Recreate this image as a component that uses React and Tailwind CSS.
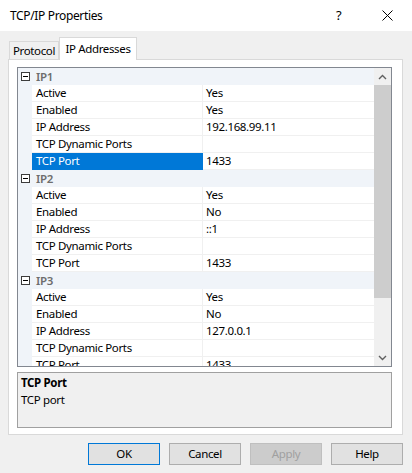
const groups = [
  {
    name: "IP1",
    rows: [
      ["Active", "Yes"],
      ["Enabled", "Yes"],
      ["IP Address", "192.168.99.11"],
      ["TCP Dynamic Ports", ""],
      ["TCP Port", "1433", true],
    ],
  },
  {
    name: "IP2",
    rows: [
      ["Active", "Yes"],
      ["Enabled", "No"],
      ["IP Address", "::1"],
      ["TCP Dynamic Ports", ""],
      ["TCP Port", "1433"],
    ],
  },
  {
    name: "IP3",
    rows: [
      ["Active", "Yes"],
      ["Enabled", "No"],
      ["IP Address", "127.0.0.1"],
      ["TCP Dynamic Ports", ""],
      ["TCP Port", "1433"],
    ],
  },
];

function MinusBox() {
  return (
    <svg width="9" height="9" viewBox="0 0 9 9" className="block">
      <rect x="0.5" y="0.5" width="8" height="8" fill="white" stroke="#3c3c3c" />
      <line x1="2" y1="4.5" x2="7" y2="4.5" stroke="#000" />
    </svg>
  );
}

function Chevron({ down }) {
  return (
    <svg width="9" height="6" viewBox="0 0 9 6" className="block">
      <polyline
        points={down ? "1,1 4.5,4.5 8,1" : "1,5 4.5,1.5 8,5"}
        fill="none"
        stroke="#606060"
        strokeWidth="1.4"
      />
    </svg>
  );
}

function Button({ label, primary, disabled }) {
  return (
    <div
      className={
        "flex h-[22px] w-[72px] items-center justify-center border " +
        (primary
          ? "border-[#0078d7] bg-[#e1e1e1] text-black"
          : disabled
          ? "border-[#bfbfbf] bg-[#cccccc] text-[#a0a0a0]"
          : "border-[#adadad] bg-[#e1e1e1] text-black")
      }
    >
      {label}
    </div>
  );
}

export default function App() {
  return (
    <div
      className="flex h-[473px] w-[412px] flex-col overflow-hidden bg-[#f0f0f0] text-[11.5px] tracking-[-0.35px] text-black"
      style={{ fontFamily: '"Noto Sans", "Open Sans", sans-serif' }}
    >
      {/* title bar */}
      <div className="flex h-[31px] items-center bg-white pl-[10px]">
        <span className="flex-1 text-[12px]">TCP/IP Properties</span>
        <span className="w-[12px] text-[13px]">?</span>
        <div className="ml-[33px] mr-[19px] flex h-[31px] w-[12px] items-center justify-center">
          <svg width="11" height="11" viewBox="0 0 11 11">
            <line x1="0.5" y1="0.5" x2="10.5" y2="10.5" stroke="#000" strokeWidth="1" />
            <line x1="10.5" y1="0.5" x2="0.5" y2="10.5" stroke="#000" strokeWidth="1" />
          </svg>
        </div>
      </div>

      {/* tabs */}
      <div className="mt-[6px] flex h-[22px] items-end pl-[9px]">
        <div className="flex h-[18px] w-[50px] items-center justify-center border border-b-0 border-[#d9d9d9] bg-[#f0f0f0]">
          Protocol
        </div>
        <div className="relative z-10 -mb-px flex h-[23px] w-[78px] items-center justify-center border border-b-0 border-[#d9d9d9] bg-white">
          IP Addresses
        </div>
      </div>

      {/* tab page */}
      <div className="ml-[8px] flex h-[376px] w-[395px] flex-col border border-[#d9d9d9] bg-white pl-[8px] pt-[7px]">
        {/* property grid */}
        <div className="flex h-[300px] w-[375px] border border-[#828790] bg-white">
          <div className="flex-1 overflow-hidden">
            {groups.map((g) => (
              <div key={g.name}>
                <div className="flex h-[17px] items-center bg-[#f0f4f9]">
                  <div className="flex w-[14px] justify-center pl-[1px]">
                    <MinusBox />
                  </div>
                  <span className="pl-[4px] font-semibold text-[#6d6d6d]">{g.name}</span>
                </div>
                {g.rows.map(([k, v, sel]) => (
                  <div key={k} className="flex h-[17px]">
                    <div className="w-[14px] bg-[#f0f4f9]" />
                    <div
                      className={
                        "flex w-[171px] items-center border-b border-r pl-[4px] " +
                        (sel
                          ? "border-[#0078d7] bg-[#0078d7] text-white"
                          : "border-[#f0f0f0] text-black")
                      }
                    >
                      {k}
                    </div>
                    <div className="flex flex-1 items-center border-b border-[#f0f0f0] pl-[3px]">{v}</div>
                  </div>
                ))}
              </div>
            ))}
          </div>
          {/* scrollbar */}
          <div className="flex w-[17px] flex-col bg-[#f0f0f0]">
            <div className="flex h-[17px] items-center justify-center">
              <Chevron />
            </div>
            <div className="h-[213px] bg-[#cdcdcd]" />
            <div className="flex-1" />
            <div className="flex h-[17px] items-center justify-center">
              <Chevron down />
            </div>
          </div>
        </div>

        {/* description */}
        <div className="mt-[5px] h-[56px] w-[375px] border border-[#a0a0a0] bg-[#f0f0f0] pl-[3px] pt-[1px]">
          <div className="font-bold leading-[17px]">TCP Port</div>
          <div className="leading-[17px]">TCP port</div>
        </div>
      </div>

      {/* buttons */}
      <div className="mt-[8px] flex justify-end gap-[9px] pr-[9px]">
        <Button label="OK" primary />
        <Button label="Cancel" />
        <Button label="Apply" disabled />
        <Button label="Help" />
      </div>
    </div>
  );
}
